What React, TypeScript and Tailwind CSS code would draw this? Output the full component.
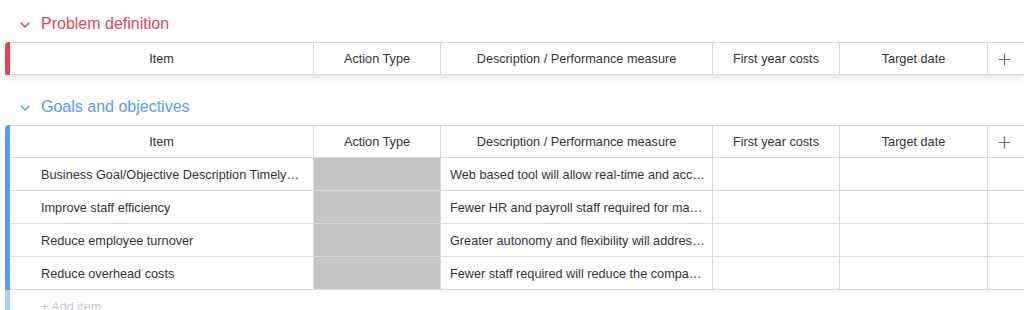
import React from "react";

type Row = { item: string; desc: string };

const goals: Row[] = [
  {
    item: "Business Goal/Objective Description Timely and accurate payroll processing",
    desc: "Web based tool will allow real-time and accurate data entry",
  },
  { item: "Improve staff efficiency", desc: "Fewer HR and payroll staff required for manual processing" },
  { item: "Reduce employee turnover", desc: "Greater autonomy and flexibility will address employee concerns" },
  { item: "Reduce overhead costs", desc: "Fewer staff required will reduce the company overhead" },
];

const cols = "grid grid-cols-[5px_304px_127px_272px_127px_148px_1fr]";

function Chevron({ color }: { color: string }) {
  return (
    <svg width="10" height="6" viewBox="0 0 10 6" fill="none" className="mt-[1px]">
      <path d="M1 1l4 4 4-4" stroke={color} strokeWidth="1.5" strokeLinecap="round" strokeLinejoin="round" />
    </svg>
  );
}

function Plus() {
  return (
    <svg width="13" height="13" viewBox="0 0 13 13" fill="none">
      <path d="M6.5 0.5v12M0.5 6.5h12" stroke="#676879" strokeWidth="1.2" />
    </svg>
  );
}

function Heading({ title, color, className }: { title: string; color: string; className: string }) {
  return (
    <div className={`flex items-center gap-[11px] pl-[15px] pt-[2px] h-[38px] ${className}`}>
      <Chevron color={color} />
      <span className="text-[16px]" style={{ color }}>
        {title}
      </span>
    </div>
  );
}

function HeaderRow({ bar }: { bar: string }) {
  const cell = "flex items-center justify-center pt-[2px] border-r border-[#d5d8ea] text-[12.7px] text-[#323338]";
  return (
    <div className={`${cols} h-[33px]`}>
      <div className={`${bar} rounded-tl-[4px]`} />
      <div className="col-span-6 grid grid-cols-subgrid border-y border-[#d5d8ea]">
        <div className={cell}>Item</div>
        <div className={cell}>Action Type</div>
        <div className={cell}>Description / Performance measure</div>
        <div className={cell}>First year costs</div>
        <div className={cell}>Target date</div>
        <div className="flex items-center pl-[10px] pt-[1px]">
          <Plus />
        </div>
      </div>
    </div>
  );
}

function DataRow({ row }: { row: Row }) {
  const b = "border-r border-b border-[#d5d8ea]";
  return (
    <div className={`${cols} h-[33px] text-[12.7px] text-[#323338]`}>
      <div className="bg-[#579bfc]" />
      <div className={`${b} flex items-center pl-[31px] pr-[12px] pt-[3px] min-w-0`}>
        <span className="truncate">{row.item}</span>
      </div>
      <div className={`${b} bg-[#c4c4c4]`} />
      <div className={`${b} flex items-center pl-[9px] pr-[6px] pt-[3px] min-w-0`}>
        <span className="truncate">{row.desc}</span>
      </div>
      <div className={b} />
      <div className={b} />
      <div className="border-b border-[#d5d8ea]" />
    </div>
  );
}

export default function App() {
  return (
    <div
      className="w-[1024px] h-[310px] overflow-hidden bg-white"
      style={{ fontFamily: '"Liberation Sans", Arial, sans-serif' }}
    >
      <div className="pl-[5px]">
        <Heading title="Problem definition" color="#e2445c" className="mt-[4px]" />
        <div className="shadow-[0_5px_8px_-3px_rgba(0,0,0,0.12)]">
          <HeaderRow bar="bg-[#e2445c]" />
        </div>

        <Heading title="Goals and objectives" color="#579bfc" className="mt-[12px]" />
        <div>
          <HeaderRow bar="bg-[#579bfc]" />
          {goals.map((r) => (
            <DataRow key={r.item} row={r} />
          ))}
          <div className={`${cols} h-[33px]`}>
            <div className="bg-[#579bfc] opacity-50" />
            <div className="col-span-6 flex items-center pl-[31px] pt-[3px] text-[12.7px] text-[#c5c7d0]">+ Add item</div>
          </div>
        </div>
      </div>
    </div>
  );
}
